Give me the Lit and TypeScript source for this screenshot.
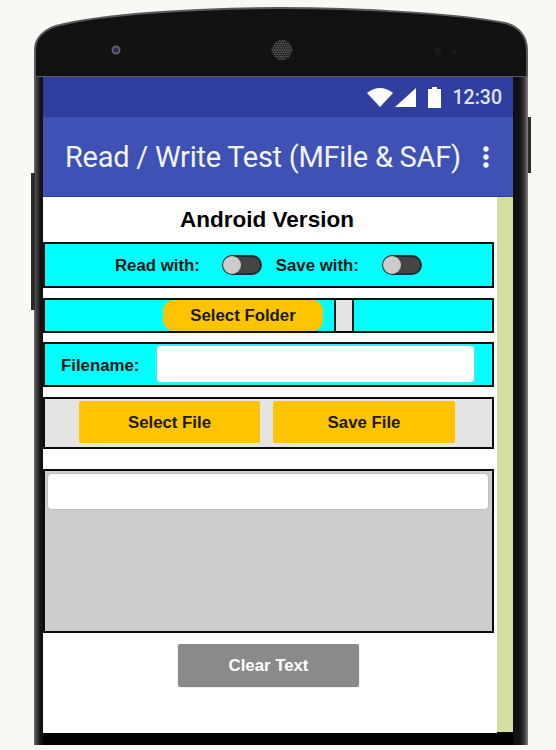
import { LitElement, html, css, svg } from "lit";
import { customElement } from "lit/decorators.js";

const speakerDots = () => {
  const out = [];
  for (let row = -4; row <= 4; row++) {
    for (let col = -4; col <= 4; col++) {
      const x = 282 + col * 2.4 + (row % 2 ? 1.2 : 0);
      const y = 50 + row * 2.2;
      if (Math.hypot(x - 282, y - 50) < 10) {
        out.push(svg`<circle cx=${x} cy=${y} r="0.9" fill="#5c5c5c"></circle>`);
      }
    }
  }
  return out;
};

@customElement("app-root")
export class AppRoot extends LitElement {
  static styles = css`
    :host {
      display: block;
      width: 556px;
      height: 750px;
      overflow: hidden;
      background: #f8f9f4;
      font-family: "Liberation Sans", Arial, sans-serif;
    }
    .phone {
      position: relative;
      width: 494px;
      margin-left: 34px;
      padding-top: 6px;
    }
    .bezel {
      display: block;
      width: 494px;
      height: 71px;
    }
    .side-left {
      position: absolute;
      left: -3px;
      top: 173px;
      width: 4px;
      height: 137px;
      background: #2b2b2b;
    }
    .side-right {
      position: absolute;
      right: -3px;
      top: 117px;
      width: 3px;
      height: 56px;
      background: #2b2b2b;
    }
    .body {
      padding: 0 15px 0 9px;
      background: linear-gradient(
        90deg,
        #777 0,
        #444 2px,
        #333 4px,
        #161616 6px,
        #111 9px,
        #111 485px,
        #222 488px,
        #444 491px,
        #888 494px
      );
    }
    .screen {
      display: flex;
      flex-direction: column;
      height: 656px;
    }
    .chin {
      height: 12px;
      flex: none;
      background: #000;
    }
    .status {
      height: 40px;
      flex: none;
      display: flex;
      align-items: center;
      justify-content: flex-end;
      padding-right: 11px;
      background: #303f9f;
    }
    .status svg {
      display: block;
      fill: #fff;
    }
    .wifi { margin-right: 2px; }
    .signal { margin-right: 12px; }
    .battery { margin-right: 12px; }
    .time {
      font-family: Roboto, sans-serif;
      font-weight: 500;
      font-size: 19.5px;
      color: #dfe3f4;
    }
    .appbar {
      height: 79px;
      flex: none;
      display: flex;
      align-items: center;
      padding: 0 24px 0 22px;
      background: #3f51b5;
      border-bottom: 1px solid #2f3f9f;
    }
    .apptitle {
      flex: 1;
      font-family: Roboto, sans-serif;
      font-size: 29px;
      letter-spacing: -0.26px;
      color: #f2f4fb;
      white-space: nowrap;
    }
    .dots {
      display: block;
      fill: #f2f4fb;
    }
    .main {
      flex: 1;
      display: flex;
      min-height: 0;
    }
    .content {
      flex: 1;
      background: #fff;
      display: flex;
      flex-direction: column;
      align-items: stretch;
      padding-right: 3px;
    }
    .strip {
      width: 16px;
      flex: none;
      background: #d3dfa0;
      margin-bottom: 1px;
    }
    .heading {
      height: 45px;
      line-height: 45px;
      text-align: center;
      font-size: 22.5px;
      font-weight: 700;
      color: #000;
      padding-right: 3px;
    }
    .row {
      display: flex;
      align-items: center;
      border: 2px solid #0c0c0c;
      box-sizing: border-box;
      font-size: 16.8px;
      font-weight: 700;
      color: #151515;
    }
    .cyan { background: #00ffff; }
    .r1 {
      height: 46px;
      padding-left: 70px;
    }
    .r2 {
      height: 35px;
      margin-top: 10px;
      padding-left: 118px;
    }
    .r3 {
      height: 45px;
      margin-top: 9px;
      padding: 0 0 1px 16px;
    }
    .r4 {
      height: 52px;
      margin-top: 10px;
      padding: 0 0 2px 34px;
      background: #e4e4e4;
    }
    .r5 {
      height: 164px;
      margin-top: 20px;
      padding: 3px;
      align-items: flex-start;
      background: #cdcdcd;
    }
    .read { margin: 2px 22px 0 0; }
    .save { margin: 2px 23px 0 14px; }
    .toggle {
      width: 40px;
      height: 20px;
      box-sizing: border-box;
      border: 2px solid #1d2b30;
      border-radius: 10px;
      background: #454545;
      position: relative;
      flex: none;
    }
    .knob {
      position: absolute;
      left: -1px;
      top: -1px;
      width: 18px;
      height: 18px;
      border-radius: 50%;
      background: #cbcbcb;
    }
    .btn {
      border: 0;
      padding: 0;
      font-family: inherit;
      font-weight: 700;
      font-size: 16.8px;
      color: #1c1a10;
      background: #ffc400;
      flex: none;
    }
    .folder {
      width: 160px;
      height: 31px;
      border-radius: 11px;
    }
    .box {
      width: 20px;
      height: 31px;
      box-sizing: border-box;
      margin-left: 11px;
      border-left: 2px solid #1a1a1a;
      border-right: 2px solid #1a1a1a;
      background: #e4e4e4;
      flex: none;
    }
    .label {
      width: 96px;
      flex: none;
      margin-top: 3px;
    }
    .field {
      display: block;
      box-sizing: border-box;
      border: 0;
      padding: 0;
      background: #fff;
      border-radius: 4px;
    }
    .fname {
      width: 317px;
      height: 36px;
      box-shadow: 0 0 0 2px #3cecec;
    }
    .rect {
      height: 42px;
      padding-top: 2px;
      border-radius: 2px;
    }
    .sel { width: 181px; margin-right: 13px; }
    .sav { width: 182px; }
    .log {
      width: 440px;
      height: 35px;
      box-shadow: 0 0 0 1px #bfbfbf;
    }
    .clear-wrap {
      display: flex;
      margin-top: 11px;
      padding-left: 135px;
    }
    .clear {
      width: 181px;
      height: 42px;
      padding-top: 2px;
      border-radius: 2px;
      background: #8a8a8a;
      color: #fff;
      box-shadow: 0 1px 1px #777;
    }
  `;

  render() {
    return html`
      <div class="phone">
        <div class="side-left"></div>
        <div class="side-right"></div>
        <svg class="bezel" viewBox="34 6 494 71">
          <path
            d="M35 77 V50 C35 38 44 30 56 26 C100 14 200 8 280 8 C360 8 460 14 505 23 C518 26 527 36 527 50 V77 Z"
            fill="#111"
            stroke="#5a5a5a"
            stroke-width="2"
          ></path>
          <circle cx="116" cy="50" r="4.5" fill="#5d5d68"></circle>
          <circle cx="116" cy="50" r="2.5" fill="#2b2c55"></circle>
          <circle cx="282" cy="50" r="11" fill="#1b1b1b"></circle>
          ${speakerDots()}
          <circle cx="438" cy="51" r="4" fill="#181818"></circle>
          <circle cx="454" cy="52" r="2.5" fill="#181818"></circle>
        </svg>
        <div class="body">
          <div class="screen">
            <div class="status">
              <svg class="wifi" width="26" height="19" viewBox="0 0 26 19">
                <path d="M0 5 Q13 -5 26 5 L13 19 Z"></path>
              </svg>
              <svg class="signal" width="21" height="19" viewBox="0 0 21 19">
                <path d="M21 0 V19 H0 Z"></path>
              </svg>
              <svg class="battery" width="13" height="21" viewBox="0 0 13 21">
                <path d="M4 0 H9 V2 H13 V21 H0 V2 H4 Z"></path>
              </svg>
              <span class="time">12:30</span>
            </div>
            <div class="appbar">
              <span class="apptitle">Read / Write Test (MFile &amp; SAF)</span>
              <svg class="dots" width="6" height="22" viewBox="0 0 6 22">
                <circle cx="3" cy="3" r="2.7"></circle>
                <circle cx="3" cy="11" r="2.7"></circle>
                <circle cx="3" cy="19" r="2.7"></circle>
              </svg>
            </div>
            <div class="main">
              <div class="content">
                <div class="heading">Android Version</div>
                <div class="row cyan r1">
                  <span class="read">Read with:</span>
                  <div class="toggle"><div class="knob"></div></div>
                  <span class="save">Save with:</span>
                  <div class="toggle"><div class="knob"></div></div>
                </div>
                <div class="row cyan r2">
                  <button class="btn folder">Select Folder</button>
                  <div class="box"></div>
                </div>
                <div class="row cyan r3">
                  <span class="label">Filename:</span>
                  <input class="field fname" />
                </div>
                <div class="row r4">
                  <button class="btn rect sel">Select File</button>
                  <button class="btn rect sav">Save File</button>
                </div>
                <div class="row r5">
                  <input class="field log" />
                </div>
                <div class="clear-wrap">
                  <button class="btn clear">Clear Text</button>
                </div>
              </div>
              <div class="strip"></div>
            </div>
          </div>
          <div class="chin"></div>
        </div>
      </div>
    `;
  }
}
